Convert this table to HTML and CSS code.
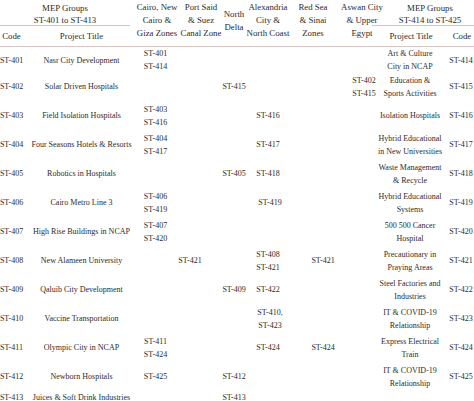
FILE: index.html
```html
<!DOCTYPE html>
<html>
<head>
<meta charset="utf-8">
<link rel="stylesheet" href="styles.css">
</head>
<body>
<div class="table">
  <div class="head">
    <div class="grp grp-left">MEP Groups<br>ST-401 to ST-413</div>
    <div class="zone z-cairo">Cairo, New<br>Cairo &amp;<br>Giza Zones</div>
    <div class="zone z-port">Port Said<br>&amp; Suez<br>Canal Zone</div>
    <div class="zone z-north">North<br>Delta</div>
    <div class="zone z-alex">Alexandria<br>City &amp;<br>North Coast</div>
    <div class="zone z-red">Red Sea<br>&amp; Sinai<br>Zones</div>
    <div class="zone z-aswan">Aswan City<br>&amp; Upper<br>Egypt</div>
    <div class="grp grp-right">MEP Groups<br>ST-414 to ST-425</div>
    <div class="sub s-code">Code</div>
    <div class="sub s-title">Project Title</div>
    <div class="sub s-title2">Project Title</div>
    <div class="sub s-code2">Code</div>
  </div>

  <div class="row first">
    <div>ST-401</div><div>Nasr City Development</div><div class="cairo">ST-401<br>ST-414</div><div></div><div></div><div></div><div></div><div></div><div class="t2">Art &amp; Culture<br>City in NCAP</div><div class="c2">ST-414</div>
  </div>
  <div class="row">
    <div>ST-402</div><div>Solar Driven Hospitals</div><div></div><div></div><div>ST-415</div><div></div><div></div><div class="aswan">ST-402<br>ST-415</div><div class="t2">Education &amp;<br>Sports Activities</div><div class="c2">ST-415</div>
  </div>
  <div class="row">
    <div>ST-403</div><div>Field Isolation Hospitals</div><div class="cairo">ST-403<br>ST-416</div><div></div><div></div><div>ST-416</div><div></div><div></div><div class="t2">Isolation Hospitals</div><div class="c2">ST-416</div>
  </div>
  <div class="row">
    <div>ST-404</div><div>Four Seasons Hotels &amp; Resorts</div><div class="cairo">ST-404<br>ST-417</div><div></div><div></div><div>ST-417</div><div></div><div></div><div class="t2">Hybrid Educational<br>in New Universities</div><div class="c2">ST-417</div>
  </div>
  <div class="row">
    <div>ST-405</div><div>Robotics in Hospitals</div><div></div><div></div><div>ST-405</div><div>ST-418</div><div></div><div></div><div class="t2">Waste Management<br>&amp; Recycle</div><div class="c2">ST-418</div>
  </div>
  <div class="row">
    <div>ST-406</div><div>Cairo Metro Line 3</div><div class="cairo">ST-406<br>ST-419</div><div></div><div></div><div class="alex2">ST-419</div><div></div><div></div><div class="t2">Hybrid Educational<br>Systems</div><div class="c2">ST-419</div>
  </div>
  <div class="row">
    <div>ST-407</div><div>High Rise Buildings in NCAP</div><div class="cairo">ST-407<br>ST-420</div><div></div><div></div><div></div><div></div><div></div><div class="t2">500 500 Cancer<br>Hospital</div><div class="c2">ST-420</div>
  </div>
  <div class="row">
    <div>ST-408</div><div>New Alameen University</div><div></div><div class="port">ST-421</div><div></div><div>ST-408<br>ST-421</div><div class="red">ST-421</div><div></div><div class="t2">Precautionary in<br>Praying Areas</div><div class="c2">ST-421</div>
  </div>
  <div class="row">
    <div>ST-409</div><div>Qaluib City Development</div><div></div><div></div><div>ST-409</div><div>ST-422</div><div></div><div></div><div class="t2">Steel Factories and<br>Industries</div><div class="c2">ST-422</div>
  </div>
  <div class="row">
    <div>ST-410</div><div>Vaccine Transportation</div><div></div><div></div><div></div><div class="alex2">ST-410,<br>ST-423</div><div></div><div></div><div class="t2">IT &amp; COVID-19<br>Relationship</div><div class="c2">ST-423</div>
  </div>
  <div class="row">
    <div>ST-411</div><div>Olympic City in NCAP</div><div class="cairo">ST-411<br>ST-424</div><div></div><div></div><div>ST-424</div><div class="red">ST-424</div><div></div><div class="t2">Express Electrical<br>Train</div><div class="c2">ST-424</div>
  </div>
  <div class="row">
    <div>ST-412</div><div>Newborn Hospitals</div><div class="cairo">ST-425</div><div></div><div>ST-412</div><div></div><div></div><div></div><div class="t2">IT &amp; COVID-19<br>Relationship</div><div class="c2">ST-425</div>
  </div>
  <div class="row last">
    <div>ST-413</div><div>Juices &amp; Soft Drink Industries</div><div></div><div></div><div>ST-413</div><div></div><div></div><div></div><div></div><div></div>
  </div>
</div>
</body>
</html>
```
FILE: styles.css
```css
html, body {
  margin: 0;
  padding: 0;
  background: #ffffff;
  overflow: hidden;
}
body {
  width: 474px;
  height: 401px;
  font-family: "Liberation Serif", "Times New Roman", serif;
  font-size: 8px;
  line-height: 13px;
  color: #2b2b2b;
}
.table {
  width: 496px;
}
.head,
.row {
  display: grid;
  grid-template-columns: 23px 117px 34px 54px 12px 56px 34px 64px 34px 68px;
}
.head {
  grid-template-rows: 26px 20px;
  border-bottom: 1px solid #dcc3c3;
  height: 47px;
  box-sizing: border-box;
  font-size: 8.8px;
}
.grp {
  grid-row: 1;
  text-align: center;
  border-bottom: 1px solid #c9c9c9;
  box-sizing: border-box;
  height: 26px;
  padding-top: 2px;
  line-height: 12px;
  white-space: nowrap;
}
.grp-left {
  grid-column: 1 / 3;
  margin-right: 10px;
}
.grp-right {
  grid-column: 9 / 11;
  margin-left: -22px;
  padding-right: 8px;
}
.zone {
  grid-row: 1 / 3;
  justify-self: center;
  align-self: center;
  text-align: center;
  white-space: nowrap;
  padding-bottom: 5px;
}
.z-cairo { grid-column: 3; }
.z-port { grid-column: 4; }
.z-north { grid-column: 5; }
.z-alex { grid-column: 6; }
.z-red { grid-column: 7; }
.z-aswan { grid-column: 8; }
.sub {
  grid-row: 2;
  justify-self: center;
  align-self: center;
  white-space: nowrap;
}
.s-code { grid-column: 1; }
.s-title { grid-column: 2; }
.s-title2 { grid-column: 9; }
.s-code2 { grid-column: 10; }

.row {
  height: 29px;
  align-items: center;
  justify-items: center;
  text-align: center;
  white-space: nowrap;
}
.row.first { height: 25px; }
.row.last { height: 12px; }
.row .cairo { padding-right: 3px; }
.row .port { padding-right: 22px; }
.row .alex2 { padding-left: 4px; }
.row .red { padding-left: 20px; }
.row .aswan { padding-left: 4px; }
.row .t2 { padding-right: 2px; }
.row .c2 { padding-right: 2px; }
```
